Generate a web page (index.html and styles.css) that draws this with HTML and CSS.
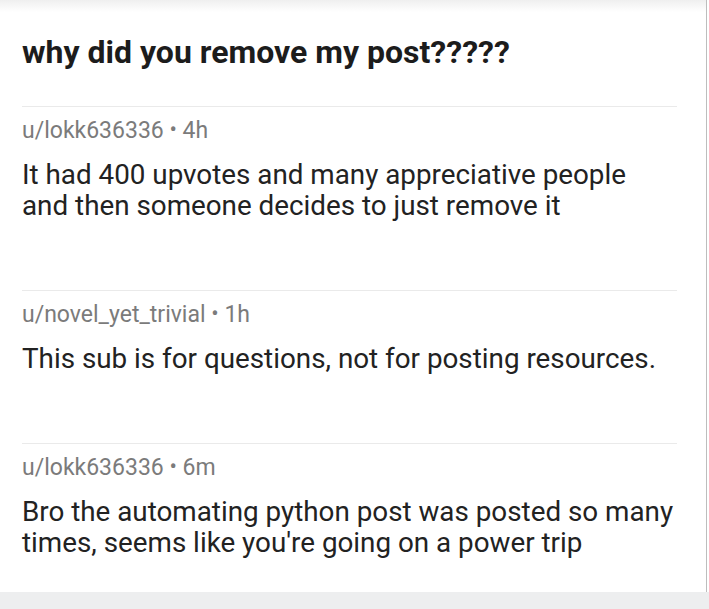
FILE: index.html
```html
<!DOCTYPE html>
<html>
<head>
<meta charset="utf-8">
<link rel="stylesheet" href="styles.css">
</head>
<body>
<div class="page">
  <div class="topband"></div>
  <div class="card">
    <h1 class="title">why did you remove my post?????</h1>
    <div class="comment">
      <div class="meta">u/lokk636336 <span class="dot">•</span> 4h</div>
      <div class="text">It had 400 upvotes and many appreciative people and then someone decides to just remove it</div>
    </div>
    <div class="comment">
      <div class="meta">u/novel_yet_trivial <span class="dot">•</span> 1h</div>
      <div class="text">This sub is for questions, not for posting resources.</div>
    </div>
    <div class="comment last">
      <div class="meta">u/lokk636336 <span class="dot">•</span> 6m</div>
      <div class="text">Bro the automating python post was posted so many times, seems like you're going on a power trip</div>
    </div>
  </div>
  <div class="bottomband"></div>
</div>
</body>
</html>
```
FILE: styles.css
```css
html, body {
  margin: 0;
  padding: 0;
  background: #ffffff;
}
.page {
  width: 709px;
  height: 609px;
  overflow: hidden;
  font-family: Roboto, "Liberation Sans", sans-serif;
}
.topband {
  height: 12px;
  background: linear-gradient(#efefef, #ffffff);
  margin-right: 2px;
  border-right: 1px solid #bdbdbd;
}
.card {
  margin-right: 2px;
  border-right: 1px solid #bdbdbd;
  padding: 22px 29px 0 22px;
  background: #ffffff;
}
.title {
  margin: 0 0 36px 0;
  font-size: 32px;
  line-height: 36px;
  font-weight: 700;
  color: #1c1c1c;
}
.comment {
  border-top: 1px solid #eaeaea;
  padding: 11px 0 69px 0;
}
.comment.last {
  padding-bottom: 34px;
}
.meta {
  font-size: 23px;
  line-height: 24px;
  color: #7b7b7b;
  margin-bottom: 16px;
}
.dot {
  font-size: 22px;
  vertical-align: 1px;
}
.text {
  font-size: 27.8px;
  line-height: 31px;
  color: #222222;
}
.bottomband {
  height: 20px;
  background: #edeeef;
}
```
